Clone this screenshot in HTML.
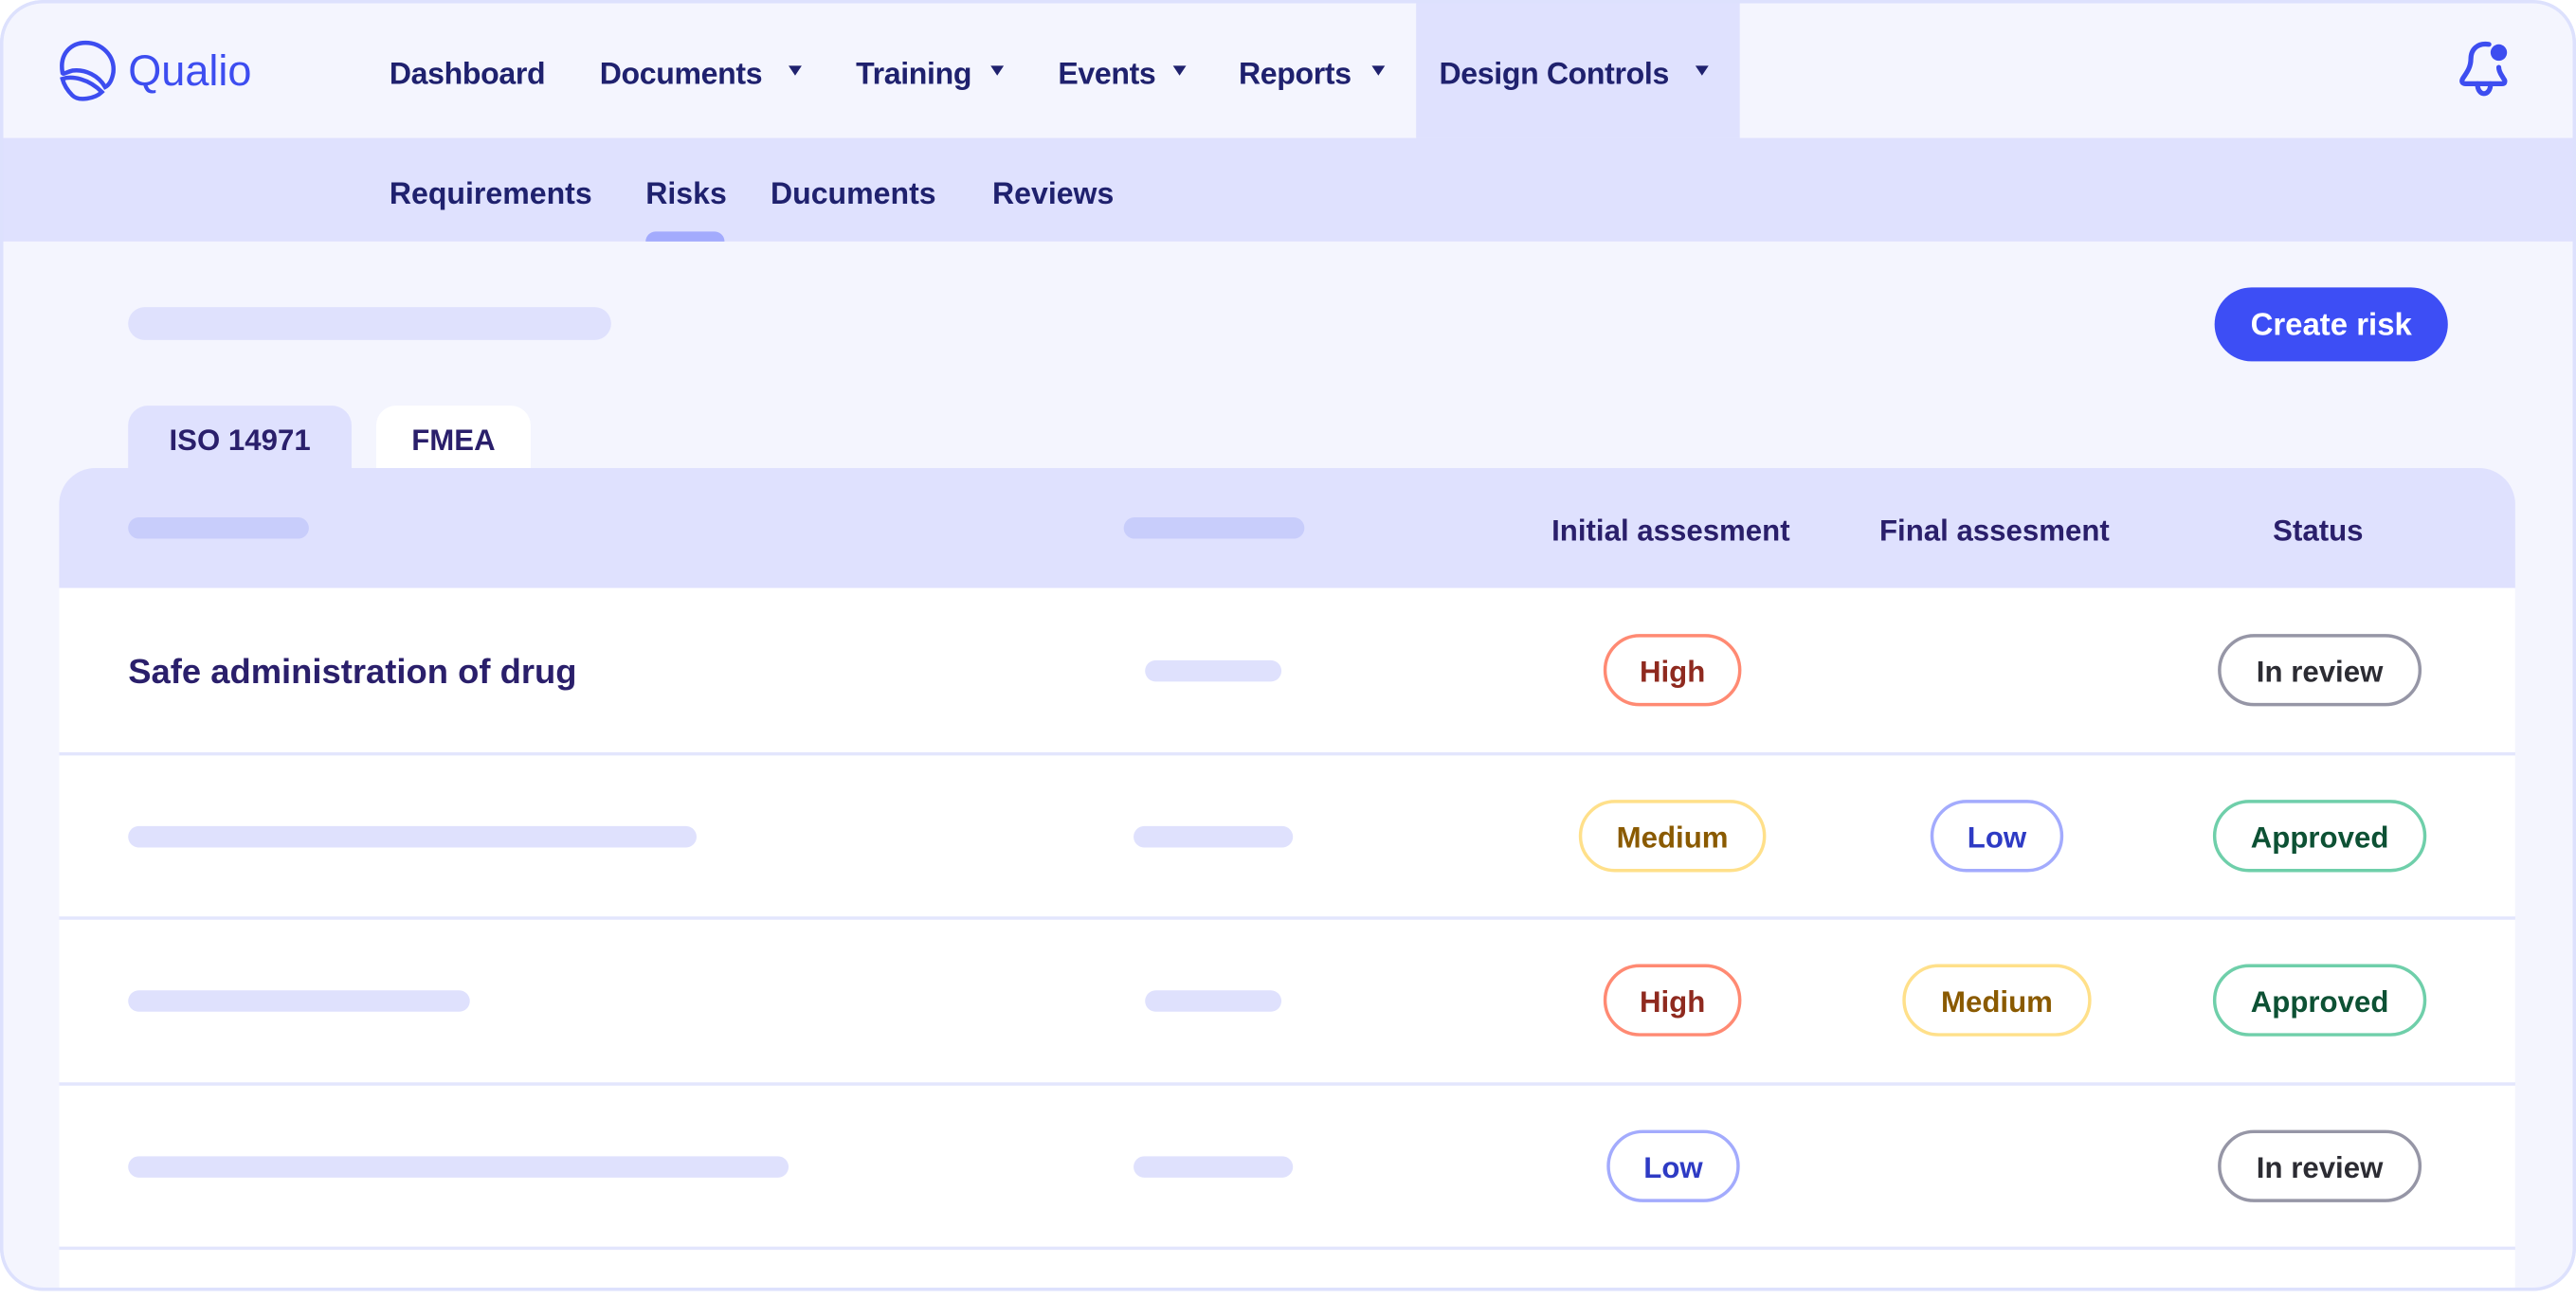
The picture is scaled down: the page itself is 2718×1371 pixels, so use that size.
<!DOCTYPE html>
<html><head><meta charset="utf-8"><style>
html,body{margin:0;padding:0;width:2718px;height:1362px;overflow:hidden;background:#fff;}
#w{position:absolute;left:0;top:0;width:1568px;height:786px;transform:scale(1.73342);transform-origin:0 0;font-family:"Liberation Sans",sans-serif;}
#frame{position:absolute;left:0;top:0;width:1564px;height:782px;border:2px solid #dde1fd;border-radius:26px;background:#f4f5fe;overflow:hidden;}
.a{position:absolute;white-space:nowrap;}
.nav{top:34px;font-size:18.5px;font-weight:bold;color:#1f216e;letter-spacing:-0.2px;}
.tri{position:absolute;top:40px;width:0;height:0;border-left:4px solid transparent;border-right:4px solid transparent;border-top:6px solid #1f216e;}
.sub{top:107px;font-size:18.5px;font-weight:bold;color:#1f216e;}
.bar{position:absolute;background:#dfe1fd;border-radius:8px;}
.hbar{position:absolute;background:#c8cdfb;border-radius:7px;height:13px;}
.th{top:313px;font-size:18px;font-weight:bold;color:#2a1f6b;text-align:center;width:200px;}
.row{position:absolute;left:36px;width:1495px;background:#fff;}
.badge{position:absolute;height:40px;border:2px solid;border-radius:22px;font-size:18px;font-weight:bold;text-align:center;line-height:42px;box-sizing:content-box;}
.hi{border-color:#ff8a73;color:#8f2a1f;}
.me{border-color:#ffe08a;color:#8a5a00;}
.lo{border-color:#a3abfd;color:#2e3bc4;}
.ir{border-color:#9696a6;color:#2c2c33;}
.ap{border-color:#6fcfaa;color:#0d5134;}
</style></head><body><div id="w"><div id="frame"></div>
<div class="a" style="left:862px;top:2px;width:197px;height:82px;background:#dfe1fe"></div>
<div class="a" style="left:2px;top:84px;width:1564px;height:63px;background:#dfe1fe"></div>
<svg class="a" style="left:34px;top:24px" width="40" height="40" viewBox="0 0 40 40"><g fill="none" stroke="#3d4df0" stroke-width="2.6" stroke-linecap="round"><path d="M4 20 C2 8 10 2 18 2 C28 2 36 10 35 20 C34 26 32 28 30 29 C26 22 18 18 10 19 C6 20 4 22 4 20 Z"/><path d="M4 24 C10 22 20 24 28 32 C24 36 14 38 10 34 C7 31 5 28 4 24 Z"/></g></svg>
<div class="a" style="left:78px;top:28px;font-size:26px;color:#3d4df0;">Qualio</div>
<div class="a nav" style="left:237px">Dashboard</div>
<div class="a nav" style="left:365px">Documents</div><div class="tri" style="left:480px"></div>
<div class="a nav" style="left:521px">Training</div><div class="tri" style="left:603px"></div>
<div class="a nav" style="left:644px">Events</div><div class="tri" style="left:714px"></div>
<div class="a nav" style="left:754px">Reports</div><div class="tri" style="left:835px"></div>
<div class="a nav" style="left:876px">Design Controls</div><div class="tri" style="left:1032px"></div>
<svg class="a" style="left:1490px;top:22px" width="44" height="44" viewBox="0 0 44 44"><g fill="none" stroke="#3d4df0" stroke-width="3" stroke-linecap="round"><path d="M25 5 C18 4 14 8 14 14 C14 20 10 24 9 26 C8 28 9 29 11 29 L33 29 C35 29 35 27 34 26 C33 24 31 22 31 19"/><path d="M18 29 C18 33 20 35 22 35 C24 35 26 33 26 29"/></g><circle cx="31" cy="10" r="5" fill="#3d4df0"/></svg>
<div class="a sub" style="left:237px">Requirements</div>
<div class="a sub" style="left:393px">Risks</div>
<div class="a sub" style="left:469px">Ducuments</div>
<div class="a sub" style="left:604px">Reviews</div>
<div class="a" style="left:393px;top:141px;width:48px;height:6px;background:#a3abfd;border-radius:6px 6px 0 0"></div>
<div class="bar" style="left:78px;top:187px;width:294px;height:20px;border-radius:10px"></div>
<div class="a" style="left:1348px;top:175px;width:142px;height:45px;background:#3d4ef5;border-radius:23px;color:#fff;font-size:19px;font-weight:bold;text-align:center;line-height:47px">Create risk</div>
<div class="a" style="left:78px;top:247px;width:136px;height:40px;background:#dfe1fe;border-radius:12px 12px 0 0;font-size:18px;font-weight:bold;color:#2a1f6b;text-align:center;line-height:42px">ISO 14971</div>
<div class="a" style="left:229px;top:247px;width:94px;height:38px;background:#fff;border-radius:12px 12px 0 0;font-size:18px;font-weight:bold;color:#2a1f6b;text-align:center;line-height:42px">FMEA</div>
<div class="a" style="left:36px;top:285px;width:1495px;height:73px;background:#dfe1fe;border-radius:22px 22px 0 0"></div>
<div class="hbar" style="left:78px;top:315px;width:110px"></div>
<div class="hbar" style="left:684px;top:315px;width:110px"></div>
<div class="a th" style="left:917px">Initial assesment</div>
<div class="a th" style="left:1114px">Final assesment</div>
<div class="a th" style="left:1311px">Status</div>
<div class="a" style="left:36px;top:358px;width:1495px;height:430px;background:#e3e6fd"></div>
<div class="row" style="top:358px;height:100px"></div>
<div class="row" style="top:460px;height:98px"></div>
<div class="row" style="top:560px;height:99px"></div>
<div class="row" style="top:661px;height:98px"></div>
<div class="row" style="top:761px;height:30px"></div>
<div class="a" style="left:78px;top:398px;font-size:21px;font-weight:bold;color:#2a1f6b">Safe administration of drug</div>
<div class="bar" style="left:697px;top:402px;width:83px;height:13px"></div>
<div class="bar" style="left:78px;top:503px;width:346px;height:13px"></div>
<div class="bar" style="left:690px;top:503px;width:97px;height:13px"></div>
<div class="bar" style="left:78px;top:603px;width:208px;height:13px"></div>
<div class="bar" style="left:697px;top:603px;width:83px;height:13px"></div>
<div class="bar" style="left:78px;top:704px;width:402px;height:13px"></div>
<div class="bar" style="left:690px;top:704px;width:97px;height:13px"></div>
<div class="badge hi" style="left:976px;top:386px;width:80px">High</div>
<div class="badge ir" style="left:1350px;top:386px;width:120px">In review</div>
<div class="badge me" style="left:961px;top:487px;width:110px">Medium</div>
<div class="badge lo" style="left:1175px;top:487px;width:77px">Low</div>
<div class="badge ap" style="left:1347px;top:487px;width:126px">Approved</div>
<div class="badge hi" style="left:976px;top:587px;width:80px">High</div>
<div class="badge me" style="left:1158px;top:587px;width:111px">Medium</div>
<div class="badge ap" style="left:1347px;top:587px;width:126px">Approved</div>
<div class="badge lo" style="left:978px;top:688px;width:77px">Low</div>
<div class="badge ir" style="left:1350px;top:688px;width:120px">In review</div>
<div class="a" style="left:0;top:0;width:1564px;height:782px;border:2px solid #dde1fd;border-radius:26px;box-shadow:0 0 0 20px #fff;pointer-events:none"></div>
</div></body></html>
